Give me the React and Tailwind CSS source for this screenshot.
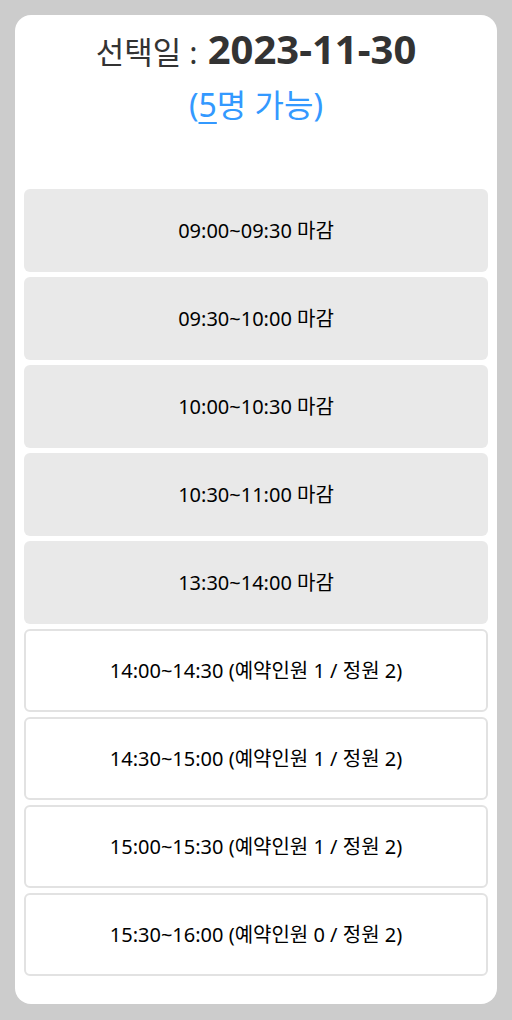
import React from "react";

const slots = [
  { time: "09:00~09:30", closed: true },
  { time: "09:30~10:00", closed: true },
  { time: "10:00~10:30", closed: true },
  { time: "10:30~11:00", closed: true },
  { time: "13:30~14:00", closed: true },
  { time: "14:00~14:30", booked: 1, cap: 2 },
  { time: "14:30~15:00", booked: 1, cap: 2 },
  { time: "15:00~15:30", booked: 1, cap: 2 },
  { time: "15:30~16:00", booked: 0, cap: 2 },
];

export default function App() {
  return (
    <div
      className="min-h-screen bg-[#cccccc] p-[15px]"
      style={{ fontFamily: '"Noto Sans", "Noto Sans CJK KR", sans-serif' }}
    >
      <div className="bg-white rounded-[16px] px-[9px] pt-[12px] pb-[28px]">
        <div className="text-center text-[#333333]">
          <div className="h-[44px] leading-[44px]">
            <span className="text-[31px]">선택일 : </span>
            <span className="ml-[2px] text-[40px] font-bold">2023-11-30</span>
          </div>
          <div className="mt-[14px] h-[40px] text-[32px] leading-[40px] text-[#3399ff]">
            (<span className="underline underline-offset-[5px] decoration-2">5</span>명 가능)
          </div>
        </div>

        <div className="mt-[64px] flex flex-col gap-[5px]">
          {slots.map((s) =>
            s.closed ? (
              <div
                key={s.time}
                className="h-[83px] rounded-[6px] bg-[#e9e9e9] flex items-center justify-center text-[20px] text-black"
              >
                {s.time} 마감
              </div>
            ) : (
              <div
                key={s.time}
                className="h-[83px] rounded-[6px] border-2 border-[#e2e2e2] bg-white flex items-center justify-center text-[20px] text-black"
              >
                {s.time} (예약인원 {s.booked} / 정원 {s.cap})
              </div>
            )
          )}
        </div>
      </div>
    </div>
  );
}
